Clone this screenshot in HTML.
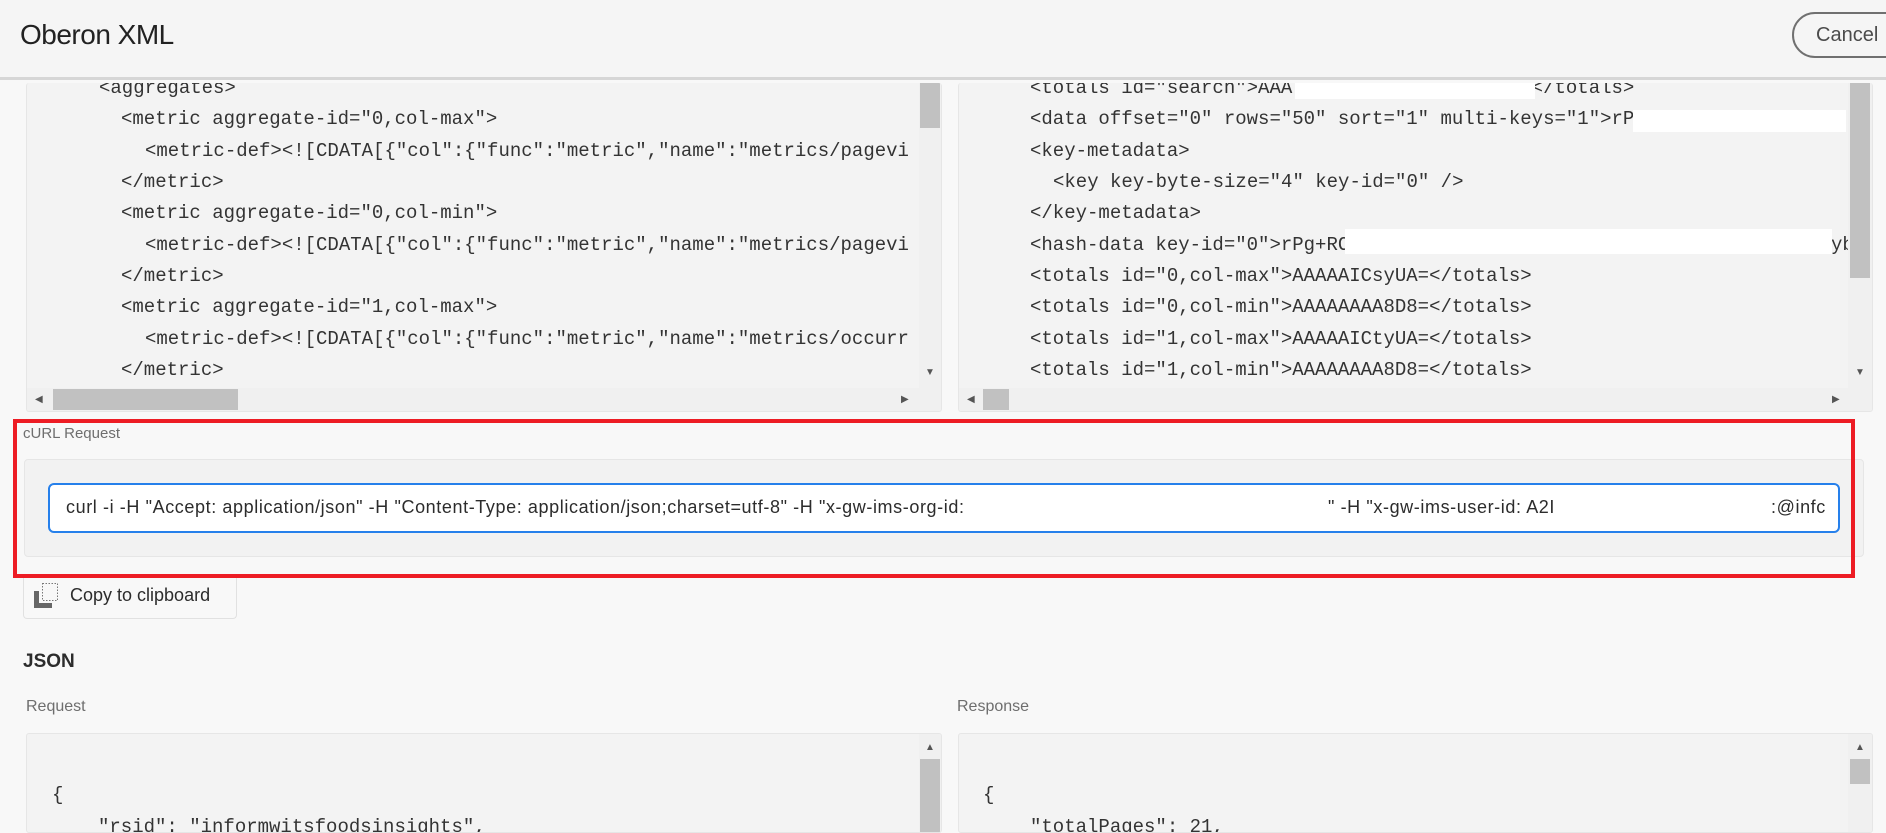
<!DOCTYPE html>
<html><head><meta charset="utf-8"><style>
*{margin:0;padding:0;box-sizing:border-box}
body{width:1886px;height:822px;overflow:hidden;background:#f8f8f8;position:relative;font-family:"Liberation Sans",sans-serif}
.abs{position:absolute}
.hdr{left:0;top:0;width:1886px;height:80px;background:#f5f5f5;border-bottom:3px solid #d6d6d6}
.title{left:20px;top:19px;font-size:28px;color:#222;letter-spacing:-0.5px}
.cancel{left:1792px;top:12px;width:130px;height:46px;border:2px solid #707070;border-radius:23px;font-size:20px;color:#4b4b4b;padding:10px 0 0 22px}
.panel{background:#f3f3f3;border:1px solid #e6e6e6;border-radius:3px;overflow:hidden}
.code{font-family:"Liberation Mono",monospace;font-size:19px;color:#333;white-space:pre;line-height:31.3px}
.ln{position:absolute;white-space:pre}
.sb{background:#f0f0f0}
.thumb{background:#c1c1c1}
.arr{font-size:10px;color:#555}
.red{left:13px;top:419px;width:1842px;height:159px;border:4px solid #ed1c24}
.lbl{font-size:15px;color:#6e6e6e}
.inp{left:48px;top:483px;width:1792px;height:50px;border:2px solid #2680eb;border-radius:6px;background:#fff}
.ct{font-size:18px;letter-spacing:0.6px;color:#2c2c2c;white-space:pre;top:497px}
.wb{background:#fff}
</style></head><body>
<div class="abs hdr"></div>
<div class="abs title">Oberon XML</div>
<div class="abs cancel">Cancel</div>

<!-- left XML panel -->
<div class="abs panel" style="left:26px;top:83px;width:916px;height:329px;border-top:none">
 <div class="code">
  <div class="ln" style="left:72px;top:-10px">&lt;aggregates&gt;</div>
  <div class="ln" style="left:94px;top:21px">&lt;metric aggregate-id="0,col-max"&gt;</div>
  <div class="ln" style="left:118px;top:53px">&lt;metric-def&gt;&lt;![CDATA[{"col":{"func":"metric","name":"metrics/pagevi</div>
  <div class="ln" style="left:94px;top:84px">&lt;/metric&gt;</div>
  <div class="ln" style="left:94px;top:115px">&lt;metric aggregate-id="0,col-min"&gt;</div>
  <div class="ln" style="left:118px;top:147px">&lt;metric-def&gt;&lt;![CDATA[{"col":{"func":"metric","name":"metrics/pagevi</div>
  <div class="ln" style="left:94px;top:178px">&lt;/metric&gt;</div>
  <div class="ln" style="left:94px;top:209px">&lt;metric aggregate-id="1,col-max"&gt;</div>
  <div class="ln" style="left:118px;top:241px">&lt;metric-def&gt;&lt;![CDATA[{"col":{"func":"metric","name":"metrics/occurr</div>
  <div class="ln" style="left:94px;top:272px">&lt;/metric&gt;</div>
 </div>
 <div class="abs sb" style="left:892px;top:0;width:24px;height:329px"></div>
 <div class="abs thumb" style="left:893px;top:0;width:20px;height:45px"></div>
 <div class="abs arr" style="left:898px;top:284px">▼</div>
 <div class="abs sb" style="left:0;top:305px;width:892px;height:24px"></div>
 <div class="abs thumb" style="left:26px;top:306px;width:185px;height:21px"></div>
 <div class="abs arr" style="left:8px;top:311px">◀</div>
 <div class="abs arr" style="left:874px;top:311px">▶</div>
</div>

<!-- right XML panel -->
<div class="abs panel" style="left:958px;top:83px;width:915px;height:329px;border-top:none">
 <div class="code">
  <div class="ln" style="left:71px;top:-10px">&lt;totals id="search"&gt;AAA                     &lt;/totals&gt;</div>
  <div class="ln" style="left:71px;top:21px">&lt;data offset="0" rows="50" sort="1" multi-keys="1"&gt;rP</div>
  <div class="ln" style="left:71px;top:53px">&lt;key-metadata&gt;</div>
  <div class="ln" style="left:94px;top:84px">&lt;key key-byte-size="4" key-id="0" /&gt;</div>
  <div class="ln" style="left:71px;top:115px">&lt;/key-metadata&gt;</div>
  <div class="ln" style="left:71px;top:147px">&lt;hash-data key-id="0"&gt;rPg+RC</div>
  <div class="ln" style="left:872px;top:147px">yb</div>
  <div class="ln" style="left:71px;top:178px">&lt;totals id="0,col-max"&gt;AAAAAICsyUA=&lt;/totals&gt;</div>
  <div class="ln" style="left:71px;top:209px">&lt;totals id="0,col-min"&gt;AAAAAAAA8D8=&lt;/totals&gt;</div>
  <div class="ln" style="left:71px;top:241px">&lt;totals id="1,col-max"&gt;AAAAAICtyUA=&lt;/totals&gt;</div>
  <div class="ln" style="left:71px;top:272px">&lt;totals id="1,col-min"&gt;AAAAAAAA8D8=&lt;/totals&gt;</div>
 </div>
 <div class="abs wb" style="left:336px;top:-3px;width:240px;height:19px"></div>
 <div class="abs wb" style="left:674px;top:27px;width:213px;height:22px"></div>
 <div class="abs wb" style="left:386px;top:146px;width:487px;height:25px"></div>
 <div class="abs sb" style="left:889px;top:0;width:26px;height:329px"></div>
 <div class="abs thumb" style="left:891px;top:0;width:20px;height:195px"></div>
 <div class="abs arr" style="left:896px;top:284px">▼</div>
 <div class="abs sb" style="left:0;top:305px;width:889px;height:24px"></div>
 <div class="abs thumb" style="left:24px;top:306px;width:26px;height:21px"></div>
 <div class="abs arr" style="left:8px;top:311px">◀</div>
 <div class="abs arr" style="left:873px;top:311px">▶</div>
</div>

<!-- cURL -->
<div class="abs lbl" style="left:23px;top:425px">cURL Request</div>
<div class="abs" style="left:24px;top:459px;width:1840px;height:98px;background:#f2f2f2;border:1px solid #e6e6e6;border-radius:4px"></div>
<div class="abs inp"></div>
<div class="abs ct" style="left:66px">curl -i -H "Accept: application/json" -H "Content-Type: application/json;charset=utf-8" -H "x-gw-ims-org-id:</div>
<div class="abs ct" style="left:1328px">" -H "x-gw-ims-user-id: A2I</div>
<div class="abs ct" style="left:1771px">:@infc</div>
<div class="abs red"></div>

<!-- copy button -->
<div class="abs" style="left:23px;top:578px;width:214px;height:41px;border:1px solid #e1e1e1;border-top:none;border-radius:0 0 4px 4px;background:#f8f8f8"></div>
<svg class="abs" style="left:34px;top:583px" width="26" height="25" viewBox="0 0 26 25">
 <rect x="8.5" y="0.5" width="15" height="17" fill="none" stroke="#777" stroke-dasharray="1.5 1.5"/>
 <path d="M0 8h5v12h13v5H0z" fill="#666"/>
</svg>
<div class="abs" style="left:70px;top:585px;font-size:18px;color:#2c2c2c">Copy to clipboard</div>

<div class="abs" style="left:23px;top:651px;font-size:19px;font-weight:bold;color:#2c2c2c">JSON</div>
<div class="abs lbl" style="left:26px;top:698px;font-size:16px">Request</div>
<div class="abs lbl" style="left:957px;top:698px;font-size:16px">Response</div>

<div class="abs panel" style="left:26px;top:733px;width:916px;height:100px">
 <div class="code">
  <div class="ln" style="left:25px;top:46px">{</div>
  <div class="ln" style="left:71px;top:78px">"rsid": "informwitsfoodsinsights",</div>
 </div>
 <div class="abs sb" style="left:892px;top:0;width:24px;height:100px"></div>
 <div class="abs arr" style="left:898px;top:8px">▲</div>
 <div class="abs thumb" style="left:893px;top:25px;width:20px;height:80px"></div>
</div>
<div class="abs panel" style="left:958px;top:733px;width:915px;height:100px">
 <div class="code">
  <div class="ln" style="left:24px;top:46px">{</div>
  <div class="ln" style="left:71px;top:78px">"totalPages": 21,</div>
 </div>
 <div class="abs sb" style="left:889px;top:0;width:26px;height:100px"></div>
 <div class="abs arr" style="left:896px;top:8px">▲</div>
 <div class="abs thumb" style="left:891px;top:25px;width:20px;height:25px"></div>
</div>
</body></html>
